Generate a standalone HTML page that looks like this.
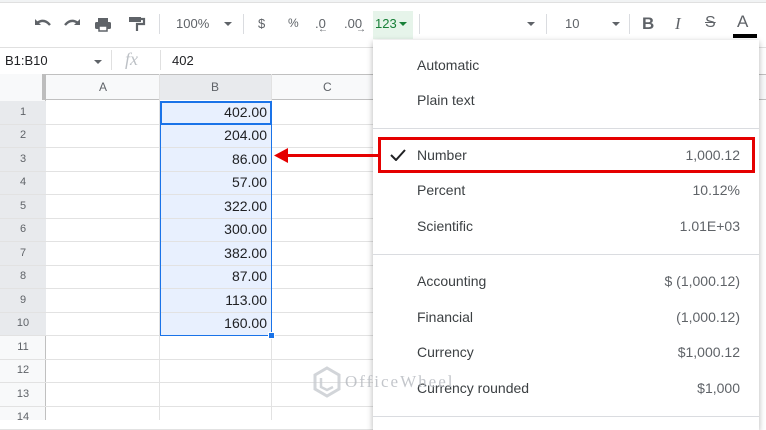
<!DOCTYPE html>
<html><head><style>
*{margin:0;padding:0;box-sizing:border-box}
body{width:766px;height:420px;overflow:hidden;background:#fff;font-family:"Liberation Sans",Arial,sans-serif;position:relative;color:#202124}
.a{position:absolute}
.t{font-size:13px;color:#5f6368}
.rh{position:absolute;left:0;width:46px;text-align:center;font-size:11px;color:#5f6368}
.cell{position:absolute;left:160px;width:111px;text-align:right;padding-right:4px;font-size:14px;color:#202124}
.mi{position:absolute;left:417px;font-size:14px;color:#3c4043}
.mv{position:absolute;right:26px;font-size:14px;color:#5f6368;text-align:right}
</style></head><body>
<div class="a" style="left:0;top:0;width:766px;height:3px;background:#f1f3f4;border-bottom:1px solid #e0e0e0"></div>
<svg class="a" style="left:30px;top:14px" width="120" height="20" viewBox="0 0 120 20">
<path d="M7 9 Q14 4 20 11" stroke="#5f6368" stroke-width="2.4" fill="none"/><path d="M5 5 v6 h6z" fill="#5f6368"/>
<path d="M48 9 Q41 4 35 11" stroke="#5f6368" stroke-width="2.4" fill="none"/><path d="M50 5 v6 h-6z" fill="#5f6368"/>
<rect x="68" y="4" width="10" height="4" fill="#5f6368"/><rect x="65" y="8" width="16" height="7" rx="1.5" fill="#5f6368"/><rect x="69" y="12" width="8" height="5" fill="#fff" stroke="#5f6368" stroke-width="1.5"/>
<rect x="99" y="3" width="12" height="5" fill="#5f6368"/><path d="M111 5h3v5h-7v7" stroke="#5f6368" stroke-width="2.2" fill="none"/>
</svg>
<div class="a" style="left:159px;top:14px;width:1px;height:20px;background:#dadce0"></div>
<div class="a t" style="left:176px;top:16px">100%</div>
<div class="a" style="left:224px;top:22px;border:4px solid transparent;border-top:4px solid #5f6368"></div>
<div class="a" style="left:243px;top:14px;width:1px;height:20px;background:#dadce0"></div>
<div class="a t" style="left:258px;top:16px">$</div>
<div class="a t" style="left:288px;top:16px;font-size:12px">%</div>
<div class="a t" style="left:315px;top:16px">.0</div><div class="a t" style="left:318px;top:24px;font-size:10px">←</div>
<div class="a t" style="left:344px;top:16px">.00</div><div class="a t" style="left:356px;top:24px;font-size:10px">→</div>
<div class="a" style="left:373px;top:11px;width:40px;height:28px;background:#e6f4ea"></div>
<div class="a" style="left:375px;top:16px;font-size:13px;color:#188038">123</div>
<div class="a" style="left:399px;top:22px;border:4px solid transparent;border-top:4px solid #188038"></div>
<div class="a" style="left:419px;top:14px;width:1px;height:20px;background:#dadce0"></div>
<div class="a" style="left:527px;top:22px;border:4px solid transparent;border-top:4px solid #5f6368"></div>
<div class="a" style="left:546px;top:14px;width:1px;height:20px;background:#dadce0"></div>
<div class="a t" style="left:565px;top:16px">10</div>
<div class="a" style="left:612px;top:22px;border:4px solid transparent;border-top:4px solid #5f6368"></div>
<div class="a" style="left:629px;top:14px;width:1px;height:20px;background:#dadce0"></div>
<div class="a" style="left:642px;top:14px;font-size:17px;font-weight:bold;color:#5f6368">B</div>
<div class="a" style="left:675px;top:14px;font-size:17px;font-style:italic;color:#5f6368;font-family:'Liberation Serif',serif">I</div>
<div class="a" style="left:705px;top:14px;font-size:16px;color:#5f6368;text-decoration:line-through">S</div>
<div class="a" style="left:737px;top:12px;font-size:17px;color:#5f6368">A</div>
<div class="a" style="left:733px;top:34px;width:24px;height:4px;background:#000"></div>
<div class="a" style="left:0;top:47px;width:766px;height:1px;background:#e0e0e0"></div>
<div class="a" style="left:5px;top:53px;font-size:13px">B1:B10</div>
<div class="a" style="left:94px;top:60px;border:4px solid transparent;border-top:4px solid #5f6368"></div>
<div class="a" style="left:111px;top:50px;width:1px;height:20px;background:#e0e0e0"></div>
<div class="a" style="left:125px;top:49px;font-size:18px;color:#bdc1c6;font-style:italic;font-family:'Liberation Serif',serif">fx</div>
<div class="a" style="left:160px;top:50px;width:1px;height:20px;background:#e0e0e0"></div>
<div class="a" style="left:172px;top:53px;font-size:13px">402</div>
<div class="a" style="left:0;top:74px;width:766px;height:26px;background:#f8f9fa;border-top:1px solid #c0c0c0;border-bottom:1px solid #c0c0c0"></div>
<div class="a" style="left:0;top:74px;width:46px;height:346px;background:#f8f9fa;border-right:1px solid #c0c0c0"></div>
<div class="a" style="left:42px;top:74px;width:4px;height:26px;background:#bdbdbd"></div>
<div class="a" style="left:160px;top:75px;width:112px;height:25px;background:#e8eaed"></div>
<div class="a" style="left:0;top:101px;width:46px;height:235px;background:#e8eaed"></div>
<div class="a t" style="left:99px;top:80px;font-size:12px">A</div>
<div class="a t" style="left:211px;top:80px;font-size:12px">B</div>
<div class="a t" style="left:323px;top:80px;font-size:12px">C</div>
<div class="a" style="left:159px;top:74px;width:1px;height:346px;background:#e2e2e2"></div>
<div class="a" style="left:271px;top:74px;width:1px;height:346px;background:#e2e2e2"></div>
<div class="a" style="left:160px;top:101px;width:112px;height:235px;background:#e8f0fe"></div>
<div id="rows"></div>
<div class="a" style="left:160px;top:101px;width:112px;height:235px;border:1px solid #1a73e8"></div>
<div class="a" style="left:160px;top:101px;width:112px;height:24px;border:2px solid #1a73e8"></div>
<div class="a" style="left:268px;top:332px;width:7px;height:7px;background:#1a73e8;border:1px solid #fff"></div>
<script>
var v=["402.00","204.00","86.00","57.00","322.00","300.00","382.00","87.00","113.00","160.00"],h="";
for(var i=0;i<14;i++){var y=100.5+i*23.5;
h+='<div class="a" style="left:0;top:'+(y+23)+'px;width:373px;height:1px;background:#e2e2e2"></div>';
h+='<div class="rh" style="top:'+(y+5)+'px">'+(i+1)+'</div>';
if(i<10)h+='<div class="cell" style="top:'+(y+3)+'px">'+v[i]+'</div>';}
document.getElementById("rows").innerHTML=h;
</script>
<div class="a" style="left:373px;top:40px;width:386px;height:390px;background:#fff;box-shadow:0 2px 6px rgba(0,0,0,.3)"></div>
<div class="mi" style="top:57px">Automatic</div>
<div class="mi" style="top:92px">Plain text</div>
<div class="a" style="left:373px;top:128px;width:386px;height:1px;background:#dadce0"></div>
<div class="a" style="left:378px;top:137px;width:377px;height:36px;border:3px solid #e50000"></div>
<svg class="a" style="left:390px;top:149px" width="16" height="12"><path d="M1 6 L6 11 L15 1" stroke="#202124" stroke-width="2" fill="none"/></svg>
<div class="mi" style="top:147px">Number</div><div class="mv" style="top:147px">1,000.12</div>
<div class="mi" style="top:182px">Percent</div><div class="mv" style="top:182px">10.12%</div>
<div class="mi" style="top:218px">Scientific</div><div class="mv" style="top:218px">1.01E+03</div>
<div class="a" style="left:373px;top:254px;width:386px;height:1px;background:#dadce0"></div>
<div class="mi" style="top:273px">Accounting</div><div class="mv" style="top:273px">$ (1,000.12)</div>
<div class="mi" style="top:309px">Financial</div><div class="mv" style="top:309px">(1,000.12)</div>
<div class="mi" style="top:344px">Currency</div><div class="mv" style="top:344px">$1,000.12</div>
<div class="mi" style="top:380px">Currency rounded</div><div class="mv" style="top:380px">$1,000</div>
<div class="a" style="left:373px;top:416px;width:386px;height:1px;background:#dadce0"></div>
<svg class="a" style="left:312px;top:366px;opacity:.8" width="30" height="32" viewBox="0 0 30 32"><path d="M15 2 L27 9 V23 L15 30 L3 23 V9Z" fill="none" stroke="#c8cbd0" stroke-width="3"/><path d="M9 12 v9 l6 3 l6-3" fill="none" stroke="#c8cbd0" stroke-width="2.5"/></svg>
<div class="a" style="left:345px;top:372px;font-family:'Liberation Serif',serif;font-size:17px;color:rgba(180,184,190,.8);letter-spacing:2px">OfficeWheel</div>
<div class="a" style="left:285px;top:154px;width:94px;height:3px;background:#e50000"></div>
<svg class="a" style="left:274px;top:148px" width="14" height="15"><path d="M0 7.5 L14 0 V15Z" fill="#e50000"/></svg>
</body></html>
